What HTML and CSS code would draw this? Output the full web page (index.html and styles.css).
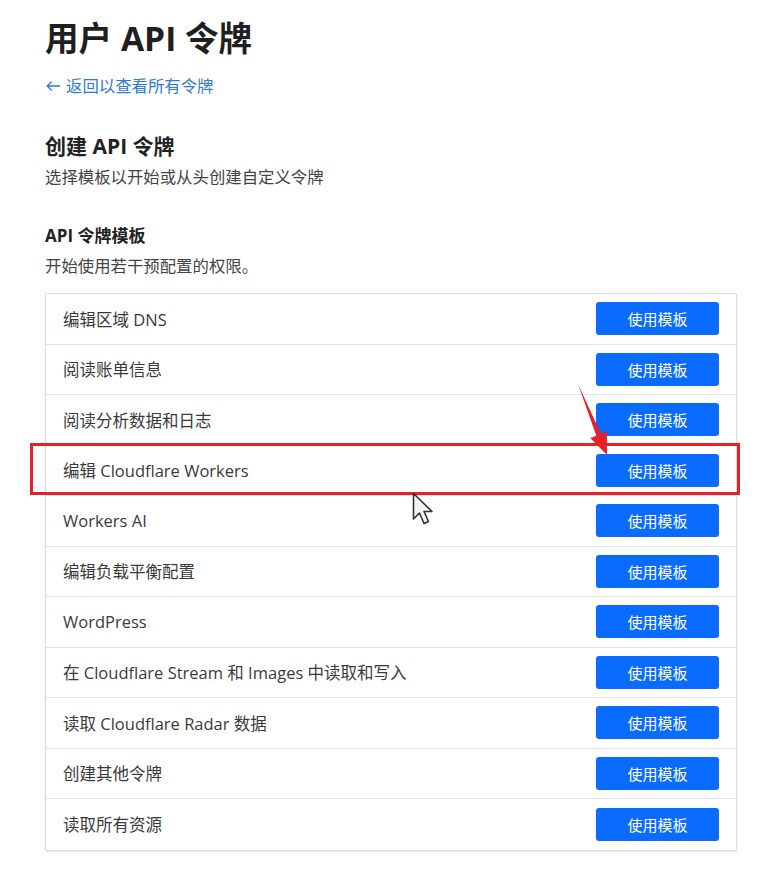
FILE: index.html
```html
<!DOCTYPE html>
<html lang="zh-CN">
<head>
<meta charset="utf-8">
<title>用户 API 令牌</title>
<link rel="stylesheet" href="styles.css">
</head>
<body>
<main class="page">
  <h1 class="title">用户 API 令牌</h1>
  <a class="back" href="#"><svg class="back-arrow" width="14" height="10" viewBox="0 0 14 10" aria-hidden="true"><path d="M13.5 5 H1.2 M5.2 1 L1.2 5 L5.2 9" fill="none" stroke="currentColor" stroke-width="1.3" stroke-linecap="round" stroke-linejoin="round"/></svg><span>返回以查看所有令牌</span></a>

  <h2 class="section-title">创建 API 令牌</h2>
  <p class="section-desc">选择模板以开始或从头创建自定义令牌</p>

  <h3 class="sub-title">API 令牌模板</h3>
  <p class="sub-desc">开始使用若干预配置的权限。</p>

  <div class="card">
    <div class="row"><span class="row-name">编辑区域 DNS</span><button class="btn">使用模板</button></div>
    <div class="row"><span class="row-name">阅读账单信息</span><button class="btn">使用模板</button></div>
    <div class="row"><span class="row-name">阅读分析数据和日志</span><button class="btn">使用模板</button></div>
    <div class="row"><span class="row-name">编辑 Cloudflare Workers</span><button class="btn">使用模板</button></div>
    <div class="row"><span class="row-name">Workers AI</span><button class="btn">使用模板</button></div>
    <div class="row"><span class="row-name">编辑负载平衡配置</span><button class="btn">使用模板</button></div>
    <div class="row"><span class="row-name">WordPress</span><button class="btn">使用模板</button></div>
    <div class="row"><span class="row-name">在 Cloudflare Stream 和 Images 中读取和写入</span><button class="btn">使用模板</button></div>
    <div class="row"><span class="row-name">读取 Cloudflare Radar 数据</span><button class="btn">使用模板</button></div>
    <div class="row"><span class="row-name">创建其他令牌</span><button class="btn">使用模板</button></div>
    <div class="row"><span class="row-name">读取所有资源</span><button class="btn">使用模板</button></div>
  </div>
</main>

<div class="highlight"></div>
<svg class="annot-arrow" width="768" height="870" viewBox="0 0 768 870" aria-hidden="true">
  <polygon points="578,384 600.9,433.7 606.9,431.3 607,455 590.3,438.1 596.3,435.7" fill="#e8202a"/>
</svg>
<svg class="cursor" width="24" height="36" viewBox="0 0 24 36" aria-hidden="true">
  <path d="M1.5 1.5 L1.5 27 L7.5 21 L12 31.5 L16.5 29.5 L12 19.5 L20 19.5 Z" fill="#f4f4f4" stroke="#333" stroke-width="1.6" stroke-linejoin="round"/>
</svg>
</body>
</html>
```

FILE: styles.css
```css
html, body {
  margin: 0;
  padding: 0;
  background: #ffffff;
}

body {
  position: relative;
  width: 768px;
  min-height: 870px;
  font-family: "Open Sans", "Noto Sans CJK SC", sans-serif;
  color: #333;
}

.page {
  padding: 17px 0 0 45px;
  display: flex;
  flex-direction: column;
  align-items: flex-start;
}

.title {
  margin: 0;
  font-size: 33.6px;
  line-height: 42px;
  font-weight: 700;
  color: #1f1f1f;
}

.back {
  margin-top: 15px;
  display: flex;
  align-items: center;
  gap: 6px;
  font-size: 16.4px;
  line-height: 24px;
  color: #2f7bd8;
  text-decoration: none;
  padding-left: 1px;
}

.back-arrow {
  display: block;
  flex: none;
}

.section-title {
  margin: 34px 0 0;
  font-size: 21px;
  line-height: 28px;
  font-weight: 700;
  color: #222;
}

.section-desc {
  margin: 5px 0 0;
  font-size: 16.4px;
  line-height: 24px;
  color: #444;
}

.sub-title {
  margin: 35px 0 0;
  font-size: 17px;
  line-height: 24px;
  font-weight: 700;
  color: #222;
}

.sub-desc {
  margin: 6px 0 0;
  font-size: 16.4px;
  line-height: 24px;
  color: #444;
}

.card {
  margin-top: 15px;
  width: 692px;
  box-sizing: border-box;
  border: 1px solid #dcdcdc;
  border-radius: 2px;
  box-shadow: 0 1px 2px rgba(0, 0, 0, 0.12);
  background: #fff;
}

.row {
  height: 50.5px;
  box-sizing: border-box;
  display: flex;
  align-items: center;
  justify-content: space-between;
  padding: 0 17px 0 17px;
  border-bottom: 1px solid #e3e3e3;
}

.row:last-child {
  border-bottom: none;
}

.row-name {
  font-size: 16.5px;
  color: #3a3a3a;
}

.btn {
  width: 123px;
  height: 33px;
  border: none;
  border-radius: 3px;
  background: #0a6cff;
  color: #fff;
  font-family: "Noto Sans CJK SC", sans-serif;
  font-size: 15px;
  padding: 0;
  cursor: pointer;
}

.highlight {
  position: absolute;
  left: 30px;
  top: 443px;
  width: 710px;
  height: 52px;
  box-sizing: border-box;
  border: 3px solid #e8202a;
  pointer-events: none;
}

.annot-arrow {
  position: absolute;
  left: 0;
  top: 0;
  pointer-events: none;
}

.cursor {
  position: absolute;
  left: 412px;
  top: 492px;
  pointer-events: none;
}
```
